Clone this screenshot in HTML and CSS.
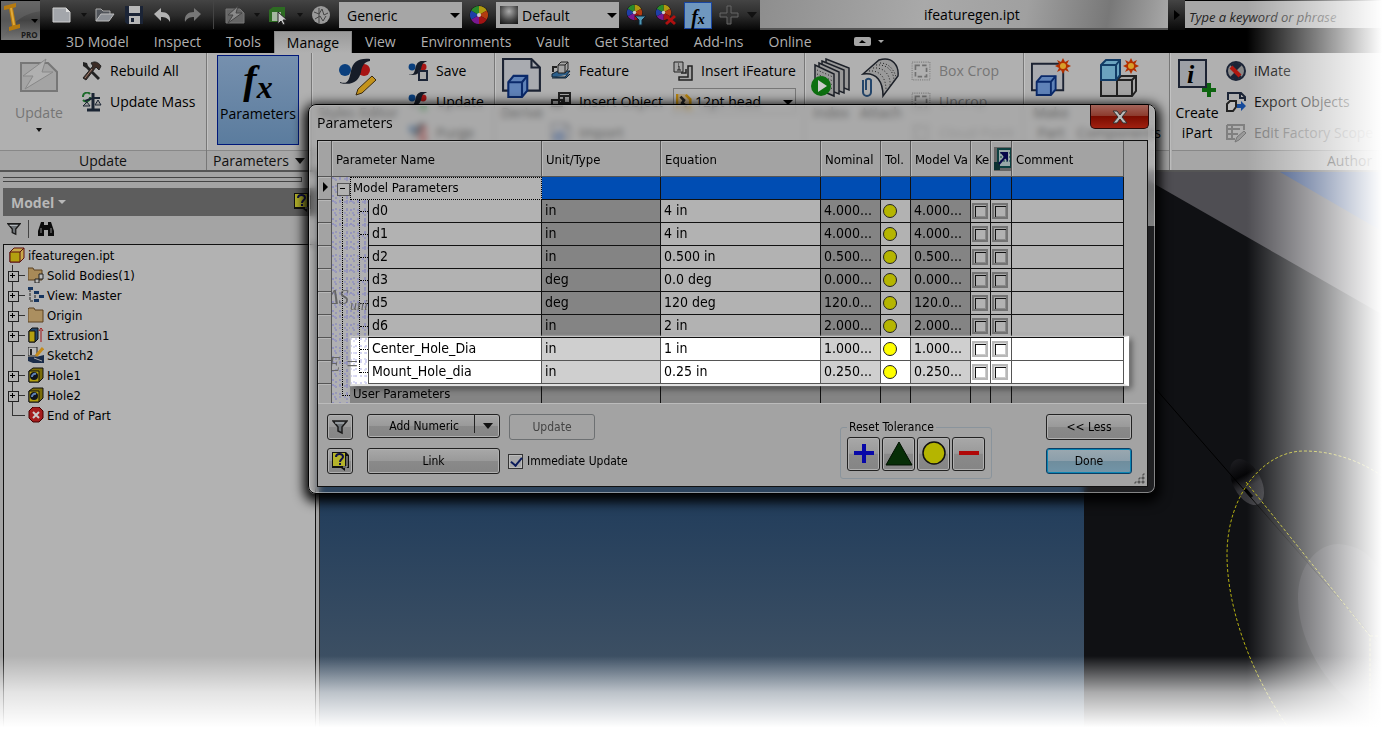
FILE: index.html
```html
<!DOCTYPE html>
<html lang="en">
<head>
  <meta charset="UTF-8" />
  <title>ifeaturegen.ipt</title>
  <link rel="stylesheet" href="styles.css">
</head>
<body>

<svg class="defs" aria-hidden="true">
  <symbol id="wheel" viewBox="0 0 20 20">
    <circle cx="10" cy="10" r="9.500" fill="#111"/>
    <path d="M10 10V1a9 9 0 0 1 7.800 4.500z" fill="#b09a10"/>
    <path d="M10 10l7.800-4.500a9 9 0 0 1 0 9z" fill="#b33c10"/>
    <path d="M10 10l7.800 4.500A9 9 0 0 1 10 19z" fill="#a01414"/>
    <path d="M10 10v9a9 9 0 0 1-7.800-4.500z" fill="#7a1890"/>
    <path d="M10 10l-7.800 4.500a9 9 0 0 1 0-9z" fill="#1e3fa8"/>
    <path d="M10 10L2.200 5.500A9 9 0 0 1 10 1z" fill="#2a8a2a"/>
    <circle cx="10" cy="10" r="2" fill="#ccc"/>
  </symbol>
  <symbol id="styles" viewBox="0 0 38 38">
    <circle cx="7" cy="12" r="6" fill="#0a3f7d"/>
    <circle cx="26" cy="12" r="6" fill="#a81414"/>
    <path d="M2 24c8 3 9-2 11-11S20 0 32 1v2c-6 1-8 5-9 11-2 9-9 14-21 11z" fill="#161c28"/>
  </symbol>
  <symbol id="part" viewBox="0 0 38 38">
    <path d="M1 1h27l8 8v22H1z" fill="#a9abb0" stroke="#1c2333" stroke-width="2"/>
    <path d="M28 1v8h8" fill="none" stroke="#1c2333" stroke-width="2"/>
    <path d="M6 23l5-6h13v14l-5 6H6z" fill="#5f82b8" stroke="#0b2a6b" stroke-width="2"/>
    <path d="M6 23h13v14M19 23l5-6" fill="none" stroke="#0b2a6b" stroke-width="2"/>
  </symbol>
  <symbol id="sheet" viewBox="0 0 38 38">
    <path d="M1 4h33v28H1z" fill="#a9abb0" stroke="#1c2333" stroke-width="2"/>
    <path d="M6 23l5-6h15v14l-5 6H6z" fill="#5f82b8" stroke="#0b2a6b" stroke-width="2"/>
    <path d="M6 23h15v14M21 23l5-6" fill="none" stroke="#0b2a6b" stroke-width="2"/>
  </symbol>
  <symbol id="burst" viewBox="0 0 16 16">
    <path d="M8 0l2 4 4-2-2 4 4 2-4 2 2 4-4-2-2 4-2-4-4 2 2-4-4-2 4-2-2-4 4 2z" fill="#b33000"/>
    <circle cx="8" cy="8" r="3" fill="#d8a02a"/>
  </symbol>
  <symbol id="helpbook" viewBox="0 0 20 20">
    <path d="M2 1h14l3 3v13h-4v3l-4-3H2z" fill="#111"/>
    <path d="M3 2h12v13H3z" fill="#b5b32a"/>
    <path d="M6 6c0-4 7-4 7 0 0 2-3 2-3 5M10 12v2" fill="none" stroke="#10104a" stroke-width="2"/>
    <path d="M17 5v11h-4" fill="none" stroke="#bbb"/>
  </symbol>
  <symbol id="funnel" viewBox="0 0 16 16">
    <path d="M1 2h14L10 8v6l-4-2V8z" fill="#6d7276" stroke="#1b1b1b" stroke-width="1.500"/>
    <path d="M3 4h9" stroke="#b9bec2"/>
  </symbol>
  <symbol id="hole" viewBox="0 0 16 16">
    <path d="M1 4l4-3h10v10l-4 4H1z" fill="#7a6c08" stroke="#111"/>
    <path d="M1 4h10v11H1z" fill="#b3a010" stroke="#111"/>
    <circle cx="6" cy="9" r="4" fill="#10141e"/>
    <path d="M4 10a3 3 0 0 1 4-3" stroke="#5f82b8" fill="none" stroke-width="2"/>
  </symbol>
  <symbol id="cloud" viewBox="0 0 18 18">
    <rect x="1" y="1" width="16" height="16" fill="none" stroke="#808080" stroke-dasharray="1 1"/>
    <rect x="4" y="4" width="10" height="10" fill="none" stroke="#707070" stroke-width="1.500" stroke-dasharray="4 2"/>
  </symbol>
</svg>

<header class="titlebar">
  <button class="app-button" aria-label="Application menu">
    <svg viewBox="0 0 40 40" width="40" height="40">
      <path d="M0 40C10 20 25 12 40 10V0H0z" fill="#6a6a6a" opacity=".5"/>
      <path d="M3 5l12-3v4l-3 1 3 17 4-1v4L8 30v-4l3-1L8 8 3 9z" fill="#b57a10"/>
      <path d="M10 7l3 17" stroke="#e0a93a" stroke-width="2"/>
      <path d="M30 18h7l-3 4z" fill="#000"/>
      <text x="20" y="37" class="pro">PRO</text>
    </svg>
  </button>
  <div class="qat">
    <svg width="22" height="20" viewBox="0 0 22 20"><path d="M2 3h13l4 4v10H2z" fill="#a3a6ab" stroke="#d0d0d0"/><path d="M15 3v4h4" fill="#ddd"/></svg>
    <i class="caret"></i>
    <svg width="22" height="20" viewBox="0 0 22 20"><path d="M2 16V4h5l2 2h7v3" fill="#50545a" stroke="#aaa"/><path d="M2 16l5-7h13l-5 7z" fill="#8b8f95" stroke="#bbb"/></svg>
    <svg width="22" height="20" viewBox="0 0 22 20"><path d="M2 1h18v18H4l-2-2z" fill="#1b2436"/><path d="M6 1h11v7H6z" fill="#b8b8b8"/><path d="M6 11h11v8H6z" fill="#b8b8b8"/><path d="M8 13h3v4H8z" fill="#1b2436"/></svg>
    <svg width="22" height="20" viewBox="0 0 22 20"><path d="M2 9l7-6v4c6 0 10 3 9 10-2-4-5-5-9-5v4z" fill="#b4b4b4"/></svg>
    <svg width="22" height="20" viewBox="0 0 22 20"><path d="M20 9l-7-6v4C7 7 3 10 4 17c2-4 5-5 9-5v4z" fill="#777"/></svg>
    <span class="qat-sep"></span>
    <svg width="22" height="20" viewBox="0 0 22 20"><path d="M2 4h14l4 4v10H2z" fill="#666" stroke="#777"/><path d="M14 1L4 10h5l-5 8 14-10h-6z" fill="#8a8a8a" stroke="#444"/></svg>
    <i class="caret"></i>
    <svg width="22" height="20" viewBox="0 0 22 20"><path d="M2 5l4-3h12v12l-4 3H2z" fill="#2d6b22"/><path d="M5 7h9v9H5z" fill="#a5b8a0"/><path d="M11 7v12l3-3 2 4 2-1-2-4h4z" fill="#ccc" stroke="#222"/></svg>
    <i class="caret"></i>
    <svg width="22" height="20" viewBox="0 0 22 20"><circle cx="11" cy="10" r="9" fill="#9a9a9a"/><path d="M4 7l5 2 3-5 2 6 4-2M5 14l5-3 3 5 3-5M9 3v15" fill="none" stroke="#444"/></svg>
    <span class="combo"><select aria-label="Material"><option>Generic</option></select></span>
    <svg class="wheel" width="20" height="20"><use href="#wheel"/></svg>
    <span class="combo look"><select aria-label="Appearance"><option>Default</option></select></span>
    <svg width="22" height="22" viewBox="0 0 22 22"><use href="#wheel" width="17" height="17"/><path d="M9 12h11l-4 4v5h-3v-5z" fill="#4f98b5" stroke="#123"/></svg>
    <svg width="22" height="22" viewBox="0 0 22 22"><use href="#wheel" width="17" height="17"/><path d="M11 12l9 8M20 12l-9 8" stroke="#b01010" stroke-width="3"/></svg>
    <button class="fx-small" aria-label="Parameters"><span class="fx"><i>f</i><i>x</i></span></button>
    <svg width="20" height="20" viewBox="0 0 20 20"><path d="M8 1h4v7h7v4h-7v7H8v-7H1V8h7z" fill="#333" stroke="#666"/></svg>
    <i class="caret big"></i>
  </div>
  <div class="doc-title">ifeaturegen.ipt</div>
  <button class="search-toggle" aria-label="Collapse search"><i></i></button>
  <input class="search" type="text" placeholder="Type a keyword or phrase" aria-label="Search">
</header>

<nav class="tabs">
  <a href="#">3D Model</a>
  <a href="#">Inspect</a>
  <a href="#">Tools</a>
  <a href="#" class="active">Manage</a>
  <a href="#">View</a>
  <a href="#">Environments</a>
  <a href="#">Vault</a>
  <a href="#">Get Started</a>
  <a href="#">Add-Ins</a>
  <a href="#">Online</a>
  <button class="tab-toggle" aria-label="Minimize ribbon"><svg width="32" height="10" viewBox="0 0 32 10"><rect width="17" height="9" rx="2" fill="#a5a5a5"/><path d="M5 6l3-3 4 3z" fill="#000"/><path d="M24 3h6l-3 3z" fill="#a5a5a5"/></svg></button>
</nav>

<div class="ribbon">
  <section class="panel panel-update">
    <div class="panel-body">
      <button class="large off">
        <svg width="40" height="40" viewBox="0 0 40 40"><path d="M2 5h27l9 9v19H2z" fill="#a4a4a4" stroke="#777" stroke-width="2"/><path d="M27 1L4 18h10L6 31l28-17H23z" fill="#b0b0b0" stroke="#888"/></svg>
        <span>Update</span>
        <i class="caret dark"></i>
      </button>
      <div class="stack">
        <button><svg width="20" height="20" viewBox="0 0 20 20"><path d="M1 1l4 1 1 3 12 12-2 2L4 7 1 5z" fill="#222"/><path d="M9 2c4-2 7-1 10 3l-2 4-3-3L4 19l-3-2L11 5z" fill="#3c2c26" stroke="#222"/><path d="M10 8l-7 9" stroke="#a08070"/></svg>Rebuild All</button>
        <button><svg width="20" height="20" viewBox="0 0 20 20"><path d="M1 5a4 4 0 0 1 7-3M8 5a4 4 0 0 1-7 3" fill="none" stroke="#1c6a2a" stroke-width="2"/><path d="M11 1v16M5 18h13" stroke="#1a2433" stroke-width="3"/><path d="M3 9l8-3h7" fill="none" stroke="#1a2433" stroke-width="2"/><path d="M1 14h7L5 10zM13 13h6l-3-5z" fill="#999" stroke="#1a2433"/></svg>Update Mass</button>
      </div>
    </div>
    <h2>Update</h2>
  </section>
  <section class="panel panel-params">
    <div class="panel-body">
      <button class="large pressed"><span class="fx"><i>f</i><i>x</i></span><span>Parameters</span></button>
    </div>
    <h2>Parameters <i class="caret dark big"></i></h2>
  </section>
  <section class="panel panel-styles">
    <div class="panel-body">
      <button class="large">
        <svg width="40" height="40" viewBox="0 0 40 40"><use href="#styles" width="38" height="38"/><path d="M34 18l4 4-14 13-6 2 2-6z" fill="#c4931a" stroke="#3a2a10"/></svg>
        <span>Styles Editor</span>
      </button>
      <div class="stack">
        <button><svg width="20" height="20" viewBox="0 0 20 20"><use href="#styles" width="22" height="22" y="-1"/><path d="M11 10h8v9h-8z" fill="#aaa" stroke="#1b2436" stroke-width="2"/></svg>Save</button>
        <button><svg width="20" height="20" viewBox="0 0 20 20"><use href="#styles" width="22" height="22" y="-1"/><path d="M12 16h7" stroke="#1c7a2a" stroke-width="4"/></svg>Update</button>
        <button><svg width="20" height="20" viewBox="0 0 20 20"><use href="#styles" width="22" height="22" y="-1"/><path d="M11 11l8 8M19 11l-8 8" stroke="#a01414" stroke-width="3"/></svg>Purge</button>
      </div>
    </div>
    <h2>Styles</h2>
  </section>
  <section class="panel panel-insert">
    <div class="panel-body">
      <button class="large"><svg width="40" height="40"><use href="#part" width="40" height="40"/></svg><span>Derive</span></button>
      <div class="stack">
        <button><svg width="20" height="20" viewBox="0 0 20 20"><path d="M1 13l6-3h12l-5 6H1zM1 17h14l4-4" fill="#2c5f8a" stroke="#123"/><path d="M7 4l3-3h7v7l-3 4H7z" fill="#a5a5a5" stroke="#222"/><path d="M7 4h7v8M14 4l3-3" fill="none" stroke="#222"/><path d="M6 6H2v5" fill="none" stroke="#222" stroke-width="2"/></svg>Feature</button>
        <button><svg width="20" height="20" viewBox="0 0 20 20"><path d="M8 1h11v10H8zM8 4h11M13 4v7M1 8h10v6H1z" fill="#a5a5a5" stroke="#222" stroke-width="2"/></svg>Insert Object</button>
        <button><svg width="20" height="20"><use href="#part" width="20" height="20"/></svg>Import</button>
      </div>
      <div class="stack">
        <button><svg width="20" height="20" viewBox="0 0 20 20"><path d="M1 1h9v10H1z" fill="#a5a5a5" stroke="#222"/><path d="M5 3h1M5 5h1v4M4 9h4" fill="none" stroke="#222"/><path d="M15 5h4v14H6v-3h9z" fill="#a5a5a5" stroke="#222" stroke-width="1.500"/><path d="M8 12l5 0v-4" fill="none" stroke="#222" stroke-width="1.500"/></svg>Insert iFeature</button>
        <span class="combo flat"><select aria-label="iFeature"><option>12pt head</option></select>
          <svg width="16" height="16" viewBox="0 0 18 18"><path d="M1 0v17h15V5l-5-5" fill="#b4a080"/><path d="M1 0v17M11 1l5 5v11h-5" fill="none" stroke="#b5830f" stroke-width="3"/><path d="M5 3l4 4-2 3 5 4" stroke="#222" stroke-width="3" fill="none"/></svg></span>
      </div>
    </div>
    <h2>Insert</h2>
  </section>
  <section class="panel panel-cloud">
    <div class="panel-body">
      <button class="large narrow">
        <svg width="40" height="40" viewBox="0 0 40 40"><g fill="#999" stroke="#1c2028" stroke-width="1.500"><path d="M15 1l23 9v22l-23-9z"/><path d="M11 3l22 9v23l-22-9z"/><path d="M8 5l20 9v22L8 28z"/><path d="M4 7l19 9v22L4 30z"/></g><path d="M6 12l16 7M6 16l16 7M6 20l16 7M12 26l10 5" stroke="#222" stroke-dasharray="1 2"/><circle cx="10" cy="28" r="10" fill="#0d7010"/><path d="M7 22l9 6-9 6z" fill="#ccc"/></svg>
        <span>Index</span></button>
      <button class="large narrow">
        <svg width="40" height="40" viewBox="0 0 40 40"><path d="M2 16L18 2c14-4 20 6 19 16L22 38c0-14-6-24-20-22z" fill="#9a9a9a" stroke="#1c2028" stroke-width="1.500"/><path d="M8 13c12-1 17 8 17 19M12 10c12-1 18 8 17 18M15 7c13-1 18 8 18 16M19 5c9 0 14 7 16 14" fill="none" stroke="#222" stroke-dasharray="1 2"/><path d="M2 22v12a4 4 0 0 0 8 0V22a3 3 0 0 0-5 0v10" fill="none" stroke="#24466b" stroke-width="2"/></svg>
        <span>Attach</span></button>
      <div class="stack off">
        <button><svg width="20" height="20"><use href="#cloud" width="20" height="20"/></svg>Box Crop</button>
        <button><svg width="20" height="20"><use href="#cloud" width="20" height="20"/></svg>Uncrop</button>
        <button><svg width="20" height="20"><use href="#cloud" width="20" height="20"/></svg>Cloud Point</button>
      </div>
    </div>
    <h2>Point Cloud</h2>
  </section>
  <section class="panel panel-layout">
    <div class="panel-body">
      <button class="large narrow"><svg width="40" height="40" viewBox="0 0 40 40"><use href="#sheet" y="2" width="36" height="36"/><use href="#burst" x="24" width="16" height="16"/></svg><span>Make<br>Part</span></button>
      <button class="large"><svg width="40" height="40" viewBox="0 0 40 40"><path d="M2 22h16v16H2zM18 22l4-4h15v15l-4 5H18z" fill="#a5a5a5" stroke="#222" stroke-width="2"/><path d="M18 22h15v16M33 22l4-4" fill="none" stroke="#222" stroke-width="2"/><path d="M2 7l5-5h14v15l-4 5H2z" fill="#6ba3bf" stroke="#123c66" stroke-width="2"/><path d="M2 7h15v15M17 7l4-5" fill="none" stroke="#123c66" stroke-width="2"/><use href="#burst" x="24" width="16" height="16"/></svg><span>Make<br>Components</span></button>
    </div>
    <h2>Layout</h2>
  </section>
  <section class="panel panel-author">
    <div class="panel-body">
      <button class="large narrow">
        <svg width="40" height="40" viewBox="0 0 40 40"><path d="M2 2h27v27H2z" fill="#9da0a6" stroke="#1c2333" stroke-width="2"/><text x="10" y="25" class="ipart">i</text><path d="M32 25v14M25 32h14" stroke="#0d6410" stroke-width="4"/></svg>
        <span>Create<br>iPart</span></button>
      <div class="stack">
        <button><svg width="20" height="20" viewBox="0 0 20 20"><circle cx="10" cy="10" r="9" fill="#888" stroke="#1b2436" stroke-width="2"/><path d="M4 4a9 9 0 0 1 12 0l-6 6zM4 16a9 9 0 0 0 12 0l-6-6z" fill="#1b2436"/><path d="M5 6l9 9" stroke="#b01810" stroke-width="4"/></svg>iMate</button>
        <button><svg width="20" height="20" viewBox="0 0 20 20"><path d="M2 8V1h13l4 4v4M14 1v5h5" fill="none" stroke="#1b2436" stroke-width="2"/><path d="M1 12l3-3h6v6l-3 4H1z" fill="#bbb" stroke="#222" stroke-width="2"/><path d="M11 12h4V9l5 5-5 5v-3h-4z" fill="#154a9a"/></svg>Export Objects</button>
        <button class="off"><svg width="20" height="20" viewBox="0 0 20 20"><path d="M1 2h17v5M1 2v14h8M1 6h13M1 11h11M6 2v14" fill="none" stroke="#808080" stroke-width="2"/><path d="M9 19l2-5 7-6 2 2-7 7z" fill="#999" stroke="#777"/></svg>Edit Factory Scope</button>
      </div>
    </div>
    <h2>Author</h2>
  </section>
</div>

<main class="workspace">
  <aside class="browser">
    <div class="grip-lines"></div>
    <div class="browser-head">
      <button class="browser-title">Model <i class="caret light"></i></button>
      <button class="icon-only" aria-label="Help"><svg width="20" height="20"><use href="#helpbook"/></svg></button>
    </div>
    <div class="browser-tools">
      <button class="icon-only" aria-label="Filter"><svg width="14" height="14"><use href="#funnel"/></svg></button>
      <span class="rule"></span>
      <button class="icon-only" aria-label="Find"><svg width="16" height="14" viewBox="0 0 16 14"><path d="M3 0h3v3h4V0h3l3 9v5h-6V8H6v6H0V9z" fill="#0c0c0c"/><path d="M3 6v5M13 6v5" stroke="#888"/></svg></button>
    </div>
    <ul class="tree">
      <li class="root"><svg width="16" height="16" viewBox="0 0 16 16"><path d="M1 5l4-4h10v10l-4 4H1z" fill="#c9a94a" stroke="#5a0f0f"/><path d="M1 5h10v10H1z" fill="#b3a010" stroke="#5a0f0f"/><path d="M11 5l4-4" stroke="#5a0f0f"/></svg>ifeaturegen.ipt</li>
      <li class="plus"><svg width="16" height="16" viewBox="0 0 16 16"><path d="M0 13V1h5l1 2h8v10z" fill="#a88a58" stroke="#5a4020"/><path d="M7 12h4v4H7zM11 7h4v5h-4z" fill="#bbb" stroke="#222"/></svg>Solid Bodies(1)</li>
      <li class="plus"><svg width="16" height="16" viewBox="0 0 16 16"><path d="M2 2v12h3M7 4v9" fill="none" stroke="#222" stroke-dasharray="3 1"/><path d="M0 0h5v3H0zM6 4h5v3H6zM11 8h5v3h-5zM6 12h5v3H6z" fill="#16355f"/></svg>View: Master</li>
      <li class="plus"><svg width="16" height="16" viewBox="0 0 16 16"><path d="M0 14V2l1-1h5l1 2h8v12H0z" fill="#ab8f60" stroke="#5a4020"/></svg>Origin</li>
      <li class="plus"><svg width="16" height="16" viewBox="0 0 16 16"><path d="M1 4l3-3h6v11l-3 3H1z" fill="#24466b" stroke="#111"/><path d="M1 4h6v11H1z" fill="#b3a010" stroke="#111"/><path d="M13 15V3M11 4l2-3 2 3" stroke="#a01414" fill="none"/></svg>Extrusion1</li>
      <li><svg width="16" height="16" viewBox="0 0 16 16"><path d="M0 0h9v9H0z" fill="#bbb" stroke="#222"/><path d="M3 2v6" stroke="#222" stroke-width="2"/><path d="M15 1L8 9" stroke="#c48a1a" stroke-width="3"/><path d="M0 10h8l8-2v8H5l-5-2z" fill="#1a2c4a"/><path d="M6 11l8 3" stroke="#aaa"/></svg>Sketch2</li>
      <li class="plus"><svg width="16" height="16"><use href="#hole"/></svg>Hole1</li>
      <li class="plus"><svg width="16" height="16"><use href="#hole"/></svg>Hole2</li>
      <li class="last"><svg width="16" height="16" viewBox="0 0 16 16"><path d="M5 0h6l4 4v7l-4 4H5l-4-4V4z" fill="#a51c1c" stroke="#400"/><path d="M5 5l6 6M11 5l-6 6" stroke="#ccc" stroke-width="2"/></svg>End of Part</li>
    </ul>
  </aside>

  <div class="scene">
    <svg width="301" height="557" viewBox="1084 172 301 557">
      <defs>
        <linearGradient id="bore" x1="0" y1="0" x2="0" y2="1">
          <stop offset="0" stop-color="#1c1c20"/><stop offset=".35" stop-color="#050507"/><stop offset=".6" stop-color="#333337"/><stop offset="1" stop-color="#3a3a3e"/>
        </linearGradient>
      </defs>
      <rect x="1084" y="172" width="301" height="557" fill="#101114"/>
      <path d="M1084 172h301v144L1158 186l-74-42z" fill="#4f4e53"/>
      <path d="M1280 172h105v61z" fill="#2d4577"/>
      <ellipse cx="1247" cy="482" rx="14" ry="25" transform="rotate(-28 1247 482)" fill="url(#bore)"/>
      <path d="M1298 600c-1-35 20-56 40-56 30 2 40 20 47 40v140c-55-25-86-80-87-124z" fill="#232328"/>
      <path d="M1155 388l222 254" stroke="#000" fill="none"/>
      <path d="M1244 488l8 9" stroke="#000" stroke-width="3"/>
      <path d="M1289 729C1245 665 1227 600 1227 555c0-62 38-104 77-104 32 0 60 12 81 27M1246 482l124 154v93M1370 636h15" fill="none" stroke="#b5b012" stroke-dasharray="3 2"/>
    </svg>
  </div>
</main>

<div class="dialog" role="dialog" aria-labelledby="dlg-title">
  <div class="dialog-title">
    <span id="dlg-title">Parameters</span>
    <button class="close" aria-label="Close"><svg width="16" height="14" viewBox="0 0 16 14"><path d="M1 1h4l3 4 3-4h4l-5 6 5 6h-4L8 9l-3 4H1l5-6z" fill="#bbb" stroke="#333"/></svg></button>
  </div>
  <div class="dialog-client">
    <div class="grid-wrap">
      <table>
        <colgroup><col class="c-row"><col class="c-g1"><col class="c-g2"><col class="c-name"><col class="c-unit"><col class="c-eq"><col class="c-val"><col class="c-tol"><col class="c-val"><col class="c-key"><col class="c-exp"><col class="c-com"></colgroup>
        <thead>
          <tr><th></th><th colspan="3">Parameter Name</th><th>Unit/Type</th><th>Equation</th><th>Nominal</th><th>Tol.</th><th>Model Va</th><th>Ke</th>
            <th class="exp"><svg width="17" height="24" viewBox="0 0 17 24"><path d="M0 0h17v24H0z" fill="#666"/><path d="M4 2h13v18H4z" fill="#98a8a8" stroke="#0d4040" stroke-width="2"/><path d="M6 6h11M6 10h11M6 14h11" stroke="#0d4040" stroke-dasharray="2 1"/><path d="M0 15h6v8H0z" fill="#0b3030"/><path d="M5 17l8-9M8 6h5v6z" stroke="#08084a" fill="#08084a" stroke-width="2"/></svg></th><th>Comment</th></tr>
        </thead>
        <tbody>
          <tr class="group current"><th></th><td class="noise open"></td><td colspan="2" class="label">Model Parameters</td><td></td><td></td><td></td><td></td><td></td><td></td><td></td><td></td></tr>
          <tr><th></th><td class="noise"></td><td class="noise leaf"></td><td>d0</td><td class="ro">in</td><td>4 in</td><td class="ro">4.000...</td><td><i class="tol"></i></td><td class="ro">4.000...</td><td class="chk"><input type="checkbox" aria-label="d0 key"></td><td class="chk"><input type="checkbox" aria-label="d0 export"></td><td></td></tr>
          <tr><th></th><td class="noise"></td><td class="noise leaf"></td><td>d1</td><td class="ro">in</td><td>4 in</td><td class="ro">4.000...</td><td><i class="tol"></i></td><td class="ro">4.000...</td><td class="chk"><input type="checkbox" aria-label="d1 key"></td><td class="chk"><input type="checkbox" aria-label="d1 export"></td><td></td></tr>
          <tr><th></th><td class="noise"></td><td class="noise leaf"></td><td>d2</td><td class="ro">in</td><td>0.500 in</td><td class="ro">0.500...</td><td><i class="tol"></i></td><td class="ro">0.500...</td><td class="chk"><input type="checkbox" aria-label="d2 key"></td><td class="chk"><input type="checkbox" aria-label="d2 export"></td><td></td></tr>
          <tr><th></th><td class="noise"></td><td class="noise leaf"></td><td>d3</td><td class="ro">deg</td><td>0.0 deg</td><td class="ro">0.000...</td><td><i class="tol"></i></td><td class="ro">0.000...</td><td class="chk"><input type="checkbox" aria-label="d3 key"></td><td class="chk"><input type="checkbox" aria-label="d3 export"></td><td></td></tr>
          <tr><th></th><td class="noise"></td><td class="noise leaf"></td><td>d5</td><td class="ro">deg</td><td>120 deg</td><td class="ro">120.0...</td><td><i class="tol"></i></td><td class="ro">120.0...</td><td class="chk"><input type="checkbox" aria-label="d5 key"></td><td class="chk"><input type="checkbox" aria-label="d5 export"></td><td></td></tr>
          <tr><th></th><td class="noise"></td><td class="noise leaf"></td><td>d6</td><td class="ro">in</td><td>2 in</td><td class="ro">2.000...</td><td><i class="tol"></i></td><td class="ro">2.000...</td><td class="chk"><input type="checkbox" aria-label="d6 key"></td><td class="chk"><input type="checkbox" aria-label="d6 export"></td><td></td></tr>
          <tr class="lit"><th></th><td class="noise"></td><td class="noise leaf"></td><td>Center_Hole_Dia</td><td class="ro">in</td><td>1 in</td><td class="ro">1.000...</td><td><i class="tol"></i></td><td class="ro">1.000...</td><td class="chk"><input type="checkbox" aria-label="Center_Hole_Dia key"></td><td class="chk"><input type="checkbox" aria-label="Center_Hole_Dia export"></td><td></td></tr>
          <tr class="lit"><th></th><td class="noise"></td><td class="noise leaf end"></td><td>Mount_Hole_dia</td><td class="ro">in</td><td>0.25 in</td><td class="ro">0.250...</td><td><i class="tol"></i></td><td class="ro">0.250...</td><td class="chk"><input type="checkbox" aria-label="Mount_Hole_dia key"></td><td class="chk"><input type="checkbox" aria-label="Mount_Hole_dia export"></td><td></td></tr>
          <tr class="group user"><th></th><td class="noise close-branch"></td><td colspan="2">User Parameters</td><td></td><td></td><td></td><td></td><td></td><td></td><td></td><td></td></tr>
        </tbody>
      </table>
      <div class="spotlight"></div>
      <svg class="watermark" width="37" height="90" viewBox="0 0 37 90"><text x="-5" y="19">ΔS</text><text x="18" y="25" class="sub">uni</text><text x="-4" y="86">E =</text></svg>
    </div>
    <div class="dialog-foot">
      <div class="foot-left">
        <button class="btn square" aria-label="Filter"><svg width="16" height="16"><use href="#funnel"/></svg></button>
        <button class="btn split">Add Numeric<i class="caret dark big"></i></button>
        <button class="btn off" disabled>Update</button>
        <button class="btn square" aria-label="Help"><svg width="20" height="20"><use href="#helpbook"/></svg></button>
        <button class="btn">Link</button>
        <label class="check"><input type="checkbox" checked>Immediate Update</label>
      </div>
      <fieldset>
        <legend>Reset Tolerance</legend>
        <button class="btn" aria-label="Upper"><svg width="26" height="26" viewBox="0 0 26 26"><path d="M13 3v19M3 12h20" stroke="#0808a8" stroke-width="4"/></svg></button>
        <button class="btn" aria-label="Median"><svg width="28" height="26" viewBox="0 0 28 26"><path d="M14 1l13 23H1z" fill="#062e06" stroke="#001000"/></svg></button>
        <button class="btn" aria-label="Nominal"><svg width="26" height="26" viewBox="0 0 26 26"><circle cx="13" cy="12" r="11" fill="#b5b500" stroke="#111" stroke-width="1.500"/></svg></button>
        <button class="btn" aria-label="Lower"><svg width="26" height="26" viewBox="0 0 26 26"><path d="M3 12h20" stroke="#b00808" stroke-width="4"/></svg></button>
      </fieldset>
      <div class="foot-right">
        <button class="btn">&lt;&lt; Less</button>
        <button class="btn default">Done</button>
      </div>
      <i class="size-grip"></i>
    </div>
  </div>
</div>

<div class="fade fade-right"></div>
<div class="fade fade-bottom"></div>

</body>
</html>
```
FILE: styles.css
```css
* { box-sizing: border-box; }
body {
  margin: 0;
  height: 100vh;
  display: flex;
  flex-direction: column;
  overflow: hidden;
  position: relative;
  background: #fff;
  color: #000;
  font-family: "Open Sans", "Noto Sans", sans-serif;
  font-size: 14px;
}
button, select, input {
  font: inherit;
  color: inherit;
}
button {
  border: 0;
  padding: 0;
  background: none;
  cursor: pointer;
}
svg { display: block; flex: none; }
.defs { position: absolute; width: 0; height: 0; }

.caret {
  flex: none;
  width: 6px;
  border: 3px solid transparent;
  border-top: 4px solid #111;
  border-bottom: 0;
}
.caret.big {
  width: 10px;
  border-width: 6px 5px 0;
}
.caret.light {
  width: 8px;
  border-width: 4px 4px 0;
  border-top-color: #b8b8b8;
}
.fx {
  font-family: "Liberation Serif", serif;
  font-weight: bold;
  display: inline-flex;
  align-items: baseline;
}

/* title bar */
.titlebar {
  flex: none;
  height: 30px;
  display: flex;
  background: #000;
}
.app-button {
  position: absolute;
  left: 1px;
  top: 1px;
  z-index: 1;
  width: 39px;
  height: 39px;
  overflow: hidden;
  background: linear-gradient(#666, #444 50%, #777);
}
.pro {
  font: bold 8px "Open Sans", sans-serif;
  fill: #1a1a1a;
}
.qat {
  flex: 0 0 720px;
  min-width: 0;
  margin-left: 40px;
  display: flex;
  align-items: center;
  gap: 7px;
  padding-left: 11px;
  background: linear-gradient(#444, #2c2c2c 50%, #060606);
}
.qat > .caret { margin-left: 1px; }
.qat-sep {
  width: 1px;
  height: 28px;
  margin: 0 3px;
  background: #444;
}
.combo {
  position: relative;
  flex: none;
  display: flex;
  width: 123px;
  height: 26px;
  background: #a6a6a6;
}
.combo::after {
  content: "";
  position: absolute;
  right: 2px;
  top: 11px;
  border: 5px solid transparent;
  border-top-color: #000;
  border-bottom: 0;
  pointer-events: none;
}
.combo select {
  appearance: none;
  width: 100%;
  padding: 0 8px;
  border: 0;
  background: none;
}
.combo.look select { padding-left: 26px; }
.combo.look::before {
  content: "";
  position: absolute;
  left: 4px;
  top: 4px;
  width: 18px;
  height: 18px;
  background: radial-gradient(circle at 50% 30%, #aaa, #444 60%, #111);
}
.fx-small {
  flex: none;
  width: 28px;
  height: 27px;
  border: 1px solid #1a46a0;
  background: #6f97bf;
  font-size: 20px;
}
.fx-small .fx i:last-child { font-size: 14px; }
.doc-title {
  flex: 1;
  display: flex;
  align-items: center;
  padding-left: 164px;
  background: linear-gradient(100deg, #8e8e8e, #a9a9a9 40%, #a0a0a0 65%, #787878 85%, #a9a9a9);
  border-bottom: 2px solid #555;
}
.search-toggle {
  flex: 0 0 17px;
  display: flex;
  align-items: center;
  justify-content: center;
  background: linear-gradient(#444, #0a0a0a);
}
.search-toggle i {
  border: 5px solid transparent;
  border-left: 6px solid #000;
  border-right: 0;
}
.search {
  flex: 0 0 200px;
  height: 27px;
  margin-top: 1px;
  padding: 4px 4px 0;
  border: 0;
  border-radius: 0;
  background: #a6a6a6;
  font-size: 13px;
  font-style: italic;
}
.search::placeholder { color: #222; }

/* ribbon tabs */
.tabs {
  flex: none;
  height: 23px;
  display: flex;
  align-items: flex-end;
  gap: 1px;
  padding-left: 54px;
  background: #000;
}
.tabs a {
  padding: 0 12px;
  line-height: 22px;
  color: #b0b0b0;
  text-decoration: none;
}
.tabs .active {
  line-height: 21px;
  border: 1px solid #888;
  border-bottom: 0;
  background: linear-gradient(#9a9a9a, #b0b0b0);
  color: #000;
}
.tab-toggle {
  margin-left: 29px;
  align-self: center;
}

/* ribbon */
.ribbon {
  flex: none;
  height: 119px;
  display: flex;
  background: #b0b0b0;
  border-bottom: 2px solid #555;
}
.panel {
  flex: none;
  display: flex;
  flex-direction: column;
  border-right: 1px solid #777;
  box-shadow: 1px 0 #c2c2c2;
}
.panel-update { width: 207px; }
.panel-params { width: 105px; }
.panel-styles { width: 183px; }
.panel-insert { width: 310px; }
.panel-cloud { width: 219px; }
.panel-layout { width: 146px; }
.panel-author { flex: 1 0 auto; border: 0; }
.panel-body {
  height: 97px;
  display: flex;
  gap: 2px;
}
.panel h2 {
  flex: 1;
  display: flex;
  align-items: center;
  justify-content: center;
  gap: 6px;
  margin: 0;
  border-top: 1px solid #888;
  font-size: 14px;
  font-weight: normal;
  background: #a6a6a6;
  color: #111;
}
.panel-author h2 { justify-content: flex-start; padding-left: 155px; }
.large {
  width: 78px;
  display: flex;
  flex-direction: column;
  align-items: center;
  gap: 5px;
  padding-top: 5px;
  line-height: 20px;
  white-space: nowrap;
}
.large.narrow { width: 50px; }
.off, .off button { color: #757575; }
.pressed {
  width: 82px;
  height: 90px;
  margin: 2px 10px;
  padding-top: 0;
  gap: 0;
  border: 1px solid #00187a;
  background: linear-gradient(#7690ae, #5b7c9e);
}
.pressed .fx {
  height: 48px;
  align-items: center;
  font-size: 40px;
}
.pressed .fx i:last-child {
  font-size: 32px;
  padding-top: 14px;
}
.stack {
  display: flex;
  flex-direction: column;
  padding: 2px 0 0 2px;
}
.stack button {
  height: 31px;
  display: flex;
  align-items: center;
  gap: 8px;
  white-space: nowrap;
}
.panel-styles .large { width: 92px; }
.panel-insert .large { width: 54px; }
.panel-insert .stack {
  width: 120px;
  padding-left: 0;
}
.panel-insert .stack + .stack { width: 126px; }
.panel-cloud { padding-left: 2px; }
.panel-cloud .large { width: 48px; }
.panel-cloud .stack { padding-left: 4px; }
.panel-author { padding-left: 2px; }
.panel-layout .large.narrow { width: 54px; }
.combo.flat {
  height: 26px;
  margin-top: 2px;
  background: none;
  border: 1px solid #777;
}
.combo.flat select { padding-left: 21px; }
.combo.flat svg {
  position: absolute;
  left: 2px;
  top: 5px;
}
.ipart { font: italic bold 26px "Liberation Serif", serif; }

/* model browser */
.workspace {
  flex: 1;
  min-height: 0;
  display: flex;
}
.browser {
  flex: 0 0 320px;
  display: flex;
  flex-direction: column;
  padding: 5px 3px 0 3px;
  background: #a4a4a4;
  border-right: 1px solid #2c2c2c;
  font-family: "DejaVu Sans Condensed", "DejaVu Sans", sans-serif;
  font-size: 13px;
}
.grip-lines {
  flex: none;
  height: 5px;
  width: 299px;
  border: 1px solid #444;
  border-left: 0;
}
.browser-head {
  flex: none;
  height: 28px;
  margin-top: 6px;
  display: flex;
  align-items: center;
  justify-content: space-between;
  padding: 0 2px 0 8px;
  background: #5d5d5d;
}
.browser-head .icon-only { width: 22px; }
.browser-title {
  display: flex;
  align-items: center;
  gap: 4px;
  color: #b8b8b8;
  font-family: "Open Sans", sans-serif;
  font-size: 14px;
  font-weight: bold;
}
.browser-tools {
  flex: none;
  height: 28px;
  display: flex;
  align-items: center;
  gap: 7px;
  padding: 0 4px 3px;
}
.rule {
  width: 1px;
  height: 18px;
  margin-right: 2px;
  background: #444;
}
.tree {
  flex: 1;
  margin: 0;
  padding: 0;
  list-style: none;
  border: 1px solid #111;
  border-bottom: 0;
  background: #b2b2b2;
}
.tree li {
  position: relative;
  height: 20px;
  display: flex;
  align-items: center;
  gap: 3px;
  padding-left: 24px;
}
.tree .root {
  padding-left: 5px;
}
.tree li:not(.root)::before {
  content: "";
  position: absolute;
  left: 8px;
  top: 0;
  width: 12px;
  height: 20px;
  border-left: 1px solid #333;
  background: linear-gradient(#333, #333) 0 10px / 12px 1px no-repeat;
}
.tree .last::before { height: 11px !important; }
.tree .plus::after {
  content: "";
  position: absolute;
  left: 4px;
  top: 6px;
  width: 9px;
  height: 9px;
  border: 1px solid #222;
  background:
    linear-gradient(#000, #000) 1px 3px / 5px 1px no-repeat,
    linear-gradient(#000, #000) 3px 1px / 1px 5px no-repeat,
    #b2b2b2;
}

/* 3D view */
.scene {
  flex: 1;
  display: flex;
  justify-content: flex-end;
  overflow: hidden;
  background: linear-gradient(#02101f, #0c2238 40%, #233e5c 60%, #3c4f63 87%, #44566a);
}

/* parameters window */
.dialog {
  position: absolute;
  left: 308px;
  top: 104px;
  width: 848px;
  padding: 0 7px 6px 8px;
  border: 1px solid #000;
  border-radius: 8px;
  background:
    linear-gradient(rgba(190, 190, 190, .3), rgba(190, 190, 190, .6)) right top / 7px 121px no-repeat,
    rgba(150, 150, 150, .12);
  backdrop-filter: blur(3px);
  box-shadow: inset 0 0 0 1px rgba(200, 200, 200, .6), 0 4px 12px 4px #000;
  font-family: "DejaVu Sans Condensed", "DejaVu Sans", sans-serif;
  font-size: 13px;
}
.dialog-title {
  height: 35px;
  margin: 0 -7px;
  padding: 0 6px 0 7px;
  display: flex;
  align-items: center;
  justify-content: space-between;
  border-radius: 7px 7px 0 0;
  background: rgba(165, 165, 165, .5);
  font-family: "Open Sans", sans-serif;
  font-size: 14px;
}
.close {
  align-self: flex-start;
  width: 59px;
  height: 24px;
  display: flex;
  align-items: center;
  justify-content: center;
  border: 1px solid #2a0a0a;
  border-top: 0;
  border-radius: 0 0 5px 5px;
  background: linear-gradient(#a5645a, #8c3a2c 48%, #7a0c00 50%, #a02010);
}
.dialog-client {
  border: 1px solid #111;
  background: #a3a3a3;
}
.grid-wrap {
  position: relative;
  height: 263px;
  overflow: hidden;
  border-bottom: 1px solid #bbb;
}
table {
  width: 806px;
  table-layout: fixed;
  border-collapse: separate;
  border-spacing: 0;
}
.c-row { width: 14px; }
.c-g1 { width: 18px; }
.c-g2 { width: 19px; }
.c-name { width: 173px; }
.c-unit { width: 119px; }
.c-eq { width: 160px; }
.c-val { width: 60px; }
.c-tol { width: 30px; }
.c-key { width: 20px; }
.c-exp { width: 21px; }
.c-com { width: 112px; }
th, td {
  height: 23px;
  padding: 0 3px 2px;
  overflow: hidden;
  white-space: nowrap;
  text-align: left;
  font-size: 14px;
  line-height: 18px;
  font-weight: normal;
  border-right: 1px solid #111;
  border-bottom: 1px solid #111;
  background: #b2b2b2;
}
th, .group td { font-size: 13px; }
th {
  background: #a3a3a3;
  border-color: #555;
  box-shadow: inset 1px 1px #b8b8b8;
}
thead th {
  height: 36px;
  padding: 2px 0 0 4px;
}
thead .exp { padding: 0 0 0 3px; }
.ro, .user td { background: #848484; }
.current td { background: #004db3; }
.current .label {
  padding-left: 2px;
  background: #b2b2b2;
  border: 1px dotted #000;
}
.current th { padding-left: 5px; }
.current th::before {
  content: "";
  display: block;
  width: 5px;
  border: 5px solid transparent;
  border-left-color: #000;
  border-right: 0;
}
/* speckled tree gutter */
td.noise {
  position: relative;
  padding: 0;
  border: 0;
  background:
    radial-gradient(circle at 1px 1px, #9494bd 1px, transparent 1px) 0 0 / 7px 9px,
    radial-gradient(circle at 3px 2px, #9a9abf 1px, transparent 1px) 0 0 / 5px 11px,
    radial-gradient(circle at 4px 3px, #9797b8 1px, transparent 1px) 0 0 / 11px 6px,
    #b0b0b2;
}
td.noise::before {
  content: "";
  position: absolute;
  left: 10px;
  top: 0;
  height: 23px;
  border-left: 1px dotted #000;
}
td.leaf { border-right: 1px solid #111; }
td.leaf::before { left: 9px; }
td.leaf::after, td.close-branch::after {
  content: "";
  position: absolute;
  left: 10px;
  right: 0;
  top: 11px;
  border-top: 1px dotted #000;
}
td.end::before, td.close-branch::before { height: 12px; }
td.open::before { top: 12px; height: 11px; }
td.open::after {
  content: "";
  position: absolute;
  left: 5px;
  top: 6px;
  width: 11px;
  height: 11px;
  border: 1px solid #555;
  background: linear-gradient(#000, #000) 2px 4px / 5px 1px no-repeat, #b2b2b2;
}
.lit td { background-color: #fff; border-color: #555; }
.lit .ro { background: #cfcfcf; }
.lit td.noise { background-color: #b0b0b2; }
.lit td.leaf {
  background:
    radial-gradient(circle at 1px 1px, #d5d5f2 1px, transparent 1px) 0 0 / 5px 7px,
    radial-gradient(circle at 4px 3px, #dedef5 1px, transparent 1px) 0 0 / 11px 6px,
    #fff;
}
.tol {
  display: block;
  width: 14px;
  height: 14px;
  margin: 1px 0 0 -1px;
  border: 1px solid #222;
  border-radius: 50%;
  background: #b5b500;
}
.lit .tol { background: #ff0; }
td.chk { padding: 0 0 0 1px; }
.chk input {
  appearance: none;
  display: block;
  width: 16px;
  height: 16px;
  margin: 0;
  border: 2px solid #747474;
  background: #b2b2b2;
  box-shadow: inset 1px 1px #a8a8a8, inset 2px 2px #111, inset -1px -1px #8a8a8a;
}
.lit .chk input {
  border-color: #b8b8b8;
  background: #fff;
  box-shadow: inset 1px 1px #ddd, inset 2px 2px #111, inset -1px -1px #ccc;
}
.spotlight {
  position: absolute;
  left: 32px;
  top: 195px;
  width: 779px;
  height: 50px;
  border: 1px solid #c4c4c4;
  border-right: 5px solid #fff;
  border-bottom: 2px solid #e0e0e0;
  box-shadow: 3px 3px 6px rgba(0, 0, 0, .45), 0 0 2px #ddd;
  pointer-events: none;
}
.watermark {
  position: absolute;
  left: 14px;
  top: 144px;
  font: italic 20px "Liberation Serif", serif;
  fill: #666;
}
.watermark .sub { font-size: 14px; }

.dialog-foot {
  position: relative;
  display: flex;
  align-items: flex-start;
  height: 82px;
  padding: 10px 15px 0 9px;
  font-size: 12px;
}
.foot-left {
  display: grid;
  grid-template-columns: 26px 133px 124px;
  grid-auto-rows: 26px;
  gap: 8px;
  column-gap: 14px;
}
.foot-left .off { width: 86px; margin-left: -5px; }
.btn {
  height: 26px;
  display: flex;
  align-items: center;
  justify-content: center;
  border: 1px solid #222;
  border-radius: 3px;
  background: linear-gradient(#a8a8a8, #9a9a9a 48%, #8a8a8a 50%, #858585);
  box-shadow: inset 0 0 0 1px #b0b0b0;
}
.btn.off {
  border-color: #6d7072;
  background: #a3a3a3;
  color: #444;
  box-shadow: none;
}
.btn.default {
  border-color: #0b3f66;
  background: linear-gradient(#9aa8b0, #8c9fab 48%, #6f8d9d 50%, #7295a8);
  box-shadow: inset 0 0 0 1px #0c86b4;
}
.btn.split {
  height: 24px;
  justify-content: flex-end;
  padding-right: 6px;
}
.split .caret {
  margin-left: 24px;
  position: relative;
}
.split .caret::before {
  content: "";
  position: absolute;
  left: -14px;
  top: -14px;
  height: 18px;
  border-left: 1px solid #222;
}
.check {
  display: flex;
  align-items: center;
  gap: 4px;
  margin-left: -6px;
  white-space: nowrap;
}
.check input {
  appearance: none;
  width: 15px;
  height: 15px;
  margin: 0;
  border: 1px solid #333;
  background: #a8a8a8;
  box-shadow: inset 0 0 0 1px #bbb;
}
.check input:checked::before {
  content: "";
  display: block;
  width: 5px;
  height: 9px;
  margin: 0 0 0 4px;
  border: solid #0c1c5c;
  border-width: 0 2px 2px 0;
  transform: rotate(40deg);
}
fieldset {
  display: flex;
  gap: 2px;
  width: 152px;
  height: 58px;
  margin: 7px 54px 0 auto;
  padding: 4px 6px 0;
  border: 1px solid #8a949c;
  border-radius: 3px;
}
legend { padding: 0 2px; line-height: 12px; }
fieldset .btn {
  width: 33px;
  height: 34px;
}
.foot-right {
  display: grid;
  grid-template-columns: 86px;
  gap: 8px;
}
.size-grip {
  position: absolute;
  right: 2px;
  bottom: 2px;
  width: 12px;
  height: 12px;
  background: radial-gradient(circle at 2px 2px, #555 1px, transparent 2px) 0 0 / 4px 4px;
  clip-path: polygon(100% 0, 100% 100%, 0 100%);
}

/* page fades out at the right and the bottom */
.fade {
  position: absolute;
  right: 0;
  bottom: 0;
  z-index: 5;
  pointer-events: none;
}
.fade-right {
  top: 0;
  width: 138px;
  background: linear-gradient(to right, transparent, rgba(255, 255, 255, .55) 55%, #fff 98%);
}
.fade-bottom {
  left: 0;
  height: 73px;
  background: linear-gradient(transparent, rgba(255, 255, 255, .65) 50%, #fff 98%);
}
```
